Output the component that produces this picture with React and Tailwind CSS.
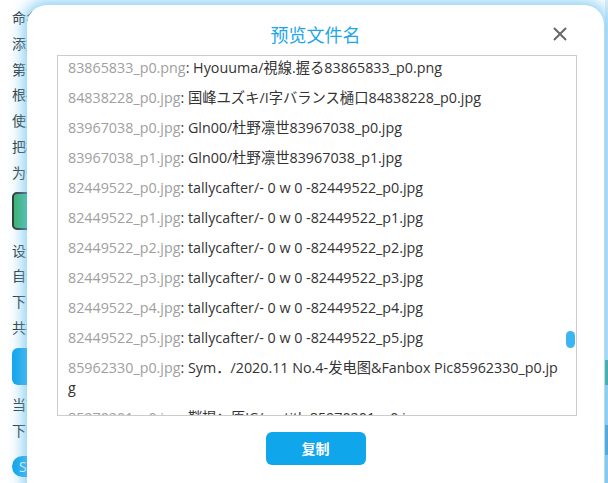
import React from 'react';

const rows = [
  { name: '83865833_p0.png', value: 'Hyouuma/視線.握る83865833_p0.png' },
  { name: '84838228_p0.jpg', value: '国峰ユズキ/I字バランス樋口84838228_p0.jpg' },
  { name: '83967038_p0.jpg', value: 'Gln00/杜野凛世83967038_p0.jpg' },
  { name: '83967038_p1.jpg', value: 'Gln00/杜野凛世83967038_p1.jpg' },
  { name: '82449522_p0.jpg', value: 'tallycafter/- 0 w 0 -82449522_p0.jpg' },
  { name: '82449522_p1.jpg', value: 'tallycafter/- 0 w 0 -82449522_p1.jpg' },
  { name: '82449522_p2.jpg', value: 'tallycafter/- 0 w 0 -82449522_p2.jpg' },
  { name: '82449522_p3.jpg', value: 'tallycafter/- 0 w 0 -82449522_p3.jpg' },
  { name: '82449522_p4.jpg', value: 'tallycafter/- 0 w 0 -82449522_p4.jpg' },
  { name: '82449522_p5.jpg', value: 'tallycafter/- 0 w 0 -82449522_p5.jpg' },
  { name: '85962330_p0.jpg', value: 'Sym．/2020.11 No.4-发电图&Fanbox Pic85962330_p0.jpg' },
  { name: '85970201_p0.jpg', value: '鞘提：原JC/no title85970201_p0.jpg' },
  { name: '85970201_p1.jpg', value: '鞘提：原JC/no title85970201_p1.jpg' },
];

const font = "font-['Open_Sans','Noto_Sans_CJK_SC',sans-serif]";

const App = () => {
  return (
    <div className={`relative flex w-[608px] h-[483px] overflow-hidden bg-white text-[14px] text-[#333] ${font}`}>
      {/* page behind the dialog */}
      <div className="flex-1 flex flex-col pl-[12px] pt-[5px] leading-[25.8px] whitespace-nowrap">
        <p>命名规则：{'{id}'}</p>
        <p>添加标记名称</p>
        <p>第一个标记</p>
        <p>根据作品类型</p>
        <p>使用第一个</p>
        <p>把标签</p>
        <p>为作品</p>
        <div className="mt-[6px] w-[120px] h-[38px] rounded-[5px] border-2 border-[#333] bg-gradient-to-r from-[#3bb46b] to-[#45c070]"></div>
        <p className="mt-[8px]">设置下载</p>
        <p>自动下载</p>
        <p>下载线程</p>
        <p>共抓取</p>
        <div className="mt-[7px] w-[120px] h-[37px] rounded-[6px] bg-[#12a5ec]"></div>
        <p className="mt-[7px]">当前状态</p>
        <p>下载进度</p>
        <div className="mt-[13px] w-[60px] h-[21px] rounded-full bg-[#12a5ec] text-white leading-[21px] pl-[7px]">Start</div>
      </div>
      <div className="w-[3px] flex flex-col">
        <div className="h-[360px] bg-[#d7eef9]"></div>
        <div className="h-[25px] bg-[#2e9d6c]"></div>
        <div className="h-[40px] bg-[#a9d8f0]"></div>
        <div className="h-[30px] bg-[#4a90c8]"></div>
        <div className="h-[28px] bg-[#9fd0ec]"></div>
      </div>

      {/* dialog */}
      <div className="absolute left-[27px] top-[5px] w-[577px] h-[500px] rounded-[20px] bg-white shadow-[0_0_14px_5px_rgba(110,195,240,0.75)]">
        <div className="relative pt-[18px] h-[50px]">
          <h2 className="text-center text-[18px] leading-[24px] text-[#1ea6ea]">预览文件名</h2>
          <button className="absolute right-[37px] top-[22px] w-[14px] h-[14px]">
            <svg viewBox="0 0 14 14" width="14" height="14">
              <path d="M1 1L13 13M13 1L1 13" stroke="#666" strokeWidth="2" />
            </svg>
          </button>
        </div>
        <div className="relative ml-[30px] w-[520px] h-[361px] border border-[#ccc] overflow-hidden">
          <div className="pl-[10px] pr-[17px] pt-[2px] text-[14.3px] break-all">
            {rows.map((row) => (
              <p key={row.name} className="leading-[20px] mb-[10px]">
                <span className="text-[#a0a0a0]">{row.name}</span>: {row.value}
              </p>
            ))}
          </div>
          <div className="absolute left-[508px] top-[275px] w-[9px] h-[17px] rounded-full bg-[#3cb6f0]"></div>
        </div>
        <div className="flex justify-center mt-[16px]">
          <button className="w-[100px] h-[33px] rounded-[6px] bg-[#10a6ec] text-white text-[14px] font-bold">复制</button>
        </div>
      </div>
    </div>
  );
};

export default App;
